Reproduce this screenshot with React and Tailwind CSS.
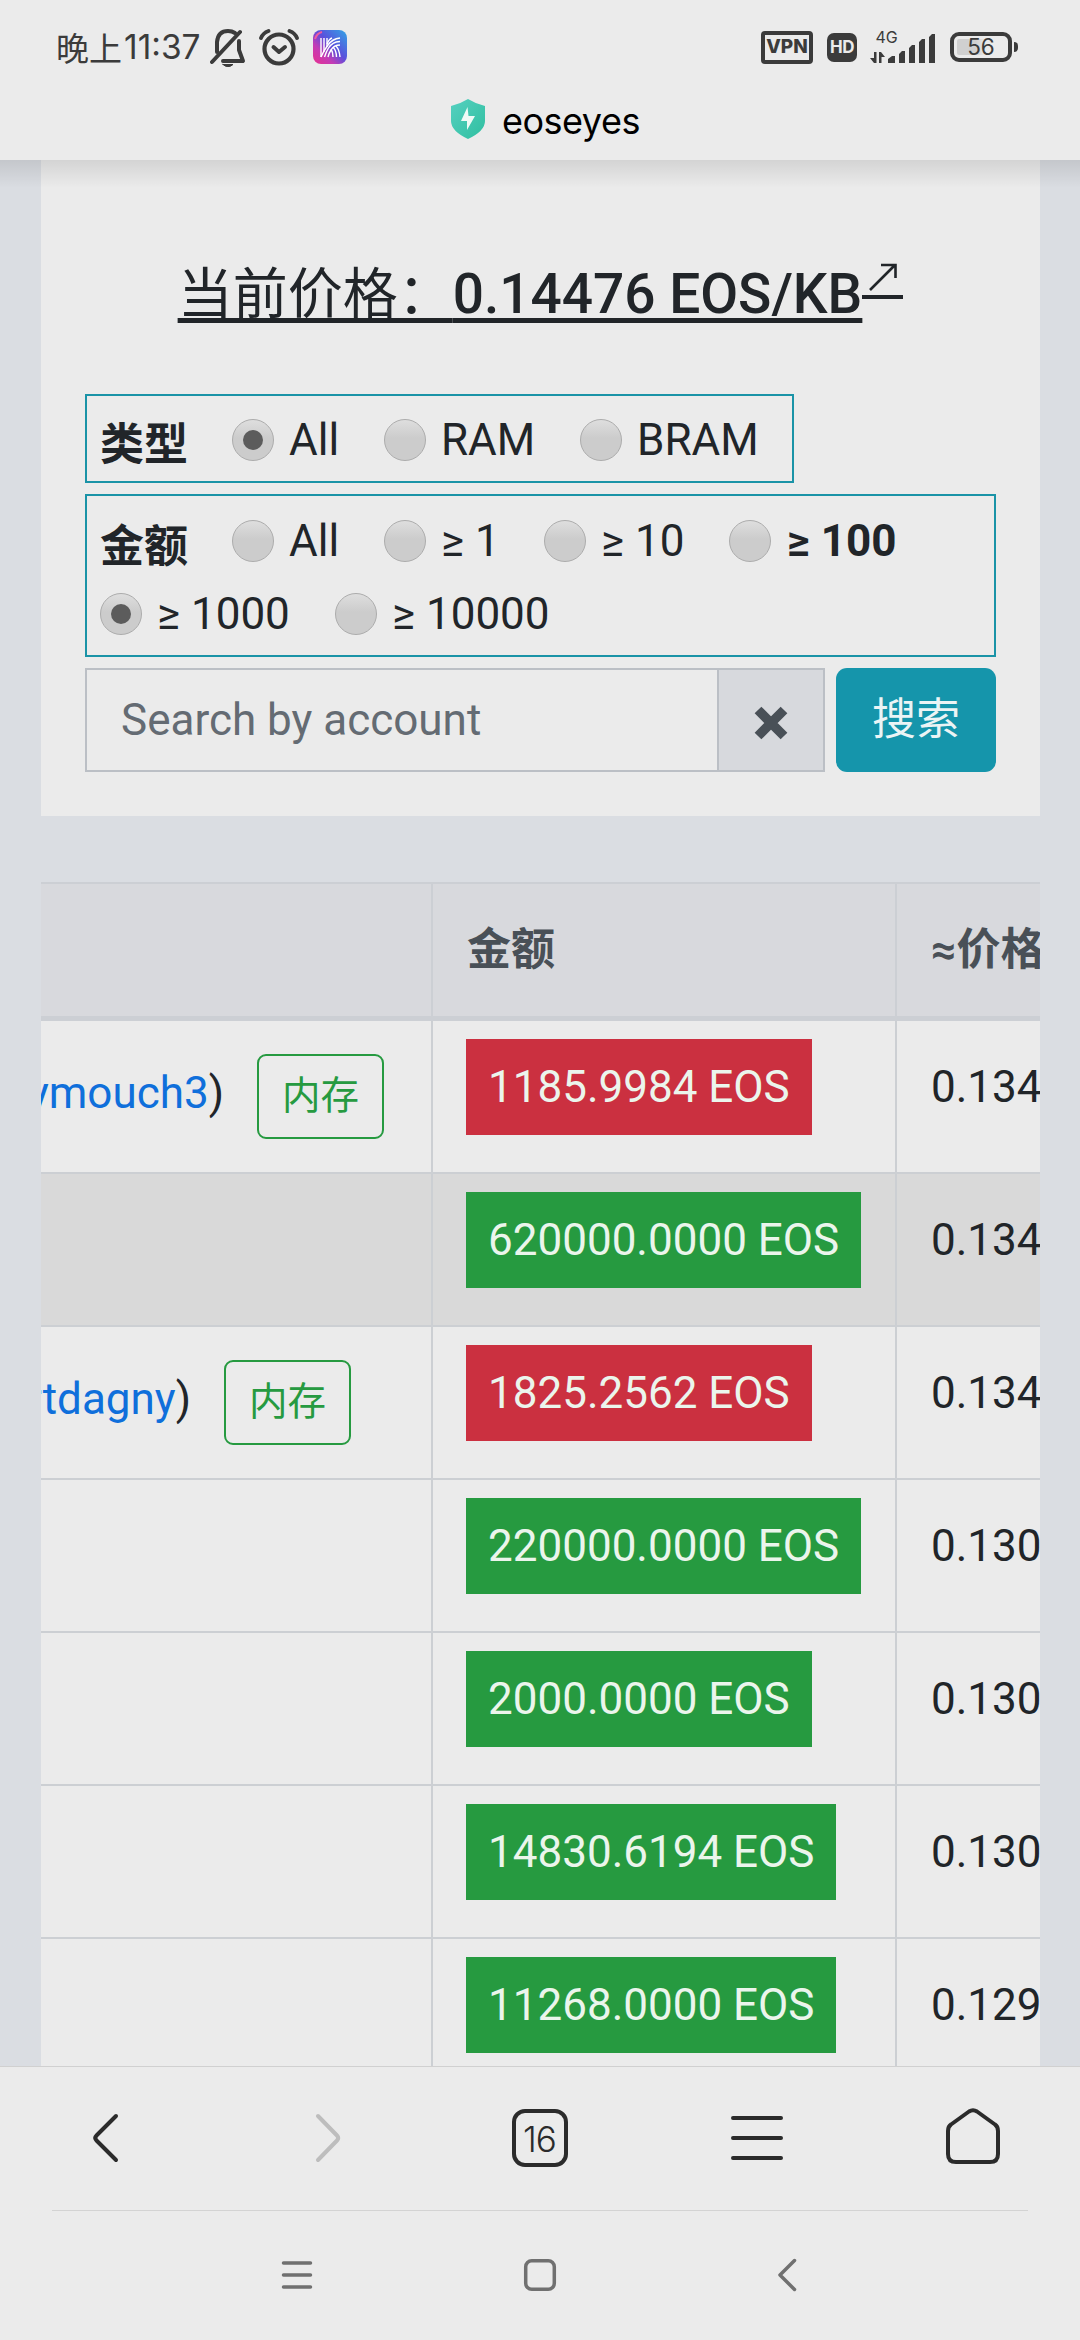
// filters
const TYPES = [
    {label: 'All', checked: true, width: 'w-[152px]'},
    {label: 'RAM', width: 'w-[196px]'},
    {label: 'BRAM', width: 'w-[180px]'}
];

const AMOUNTS = [
    {label: 'All', width: 'w-[152px]'},
    {label: '≥ 1', width: 'w-[160px]'},
    {label: '≥ 10', width: 'w-[185px]'},
    {label: '≥ 100', bold: true, width: 'w-[180px]'}
];

const LARGE_AMOUNTS = [
    {label: '≥ 1000', checked: true, width: 'w-[235px]'},
    {label: '≥ 10000', width: 'w-[220px]'}
];

// table rows
const ROWS = [
    {account: 'ymouch3', pad: 'pr-[47px]', amount: '1185.9984 EOS', sell: true, price: '0.134'},
    {amount: '620000.0000 EOS', price: '0.134', active: true},
    {account: 'rtdagny', pad: 'pr-[80px]', amount: '1825.2562 EOS', sell: true, price: '0.134'},
    {amount: '220000.0000 EOS', price: '0.130'},
    {amount: '2000.0000 EOS', price: '0.130'},
    {amount: '14830.6194 EOS', price: '0.130'},
    {amount: '11268.0000 EOS', price: '0.129'}
];

const StatusBar = () => (
    <div className="flex h-[94px] items-center pl-14 pr-[62px] text-[#3b3b3b]">
        <span className="flex w-[154px] shrink-0 items-center whitespace-nowrap text-[#3b3b3b]">
            <span className="font-['Noto_Sans_CJK_SC',sans-serif] text-[33px]">晚上</span>
            <span className="ml-0.5 font-['Inter',sans-serif] text-[33.500px] font-normal">11:37</span>
        </span>
        <svg className="h-10 w-9 shrink-0" viewBox="0 0 36 40" fill="none" stroke="currentColor" strokeWidth="4" strokeLinecap="round" strokeLinejoin="round">
            <path d="M7 25V15Q8 4 18 4Q22 4 25 6"/>
            <path d="M29 14V23L33 34H13"/>
            <path d="M2 35L30 5"/>
            <path d="M13 37.500H23Q18 42 13 37.500Z" fill="currentColor" strokeWidth="1"/>
        </svg>
        <svg className="ml-[13px] h-10 w-10 shrink-0" viewBox="0 0 40 40" fill="none" stroke="currentColor" strokeWidth="4.200" strokeLinecap="round" strokeLinejoin="round">
            <circle cx="20" cy="22" r="14.500"/>
            <path d="M14.500 20L20 25L26 20" strokeWidth="4"/>
            <path d="M2 11Q4 6 9.500 4M38 11Q36 6 30.500 4" strokeWidth="3.800"/>
        </svg>
        <svg className="ml-3.5 h-[34px] w-[34px] shrink-0" viewBox="0 0 34 34">
            <defs>
                <linearGradient id="app" x1="0" y1="1" x2="1" y2="0">
                    <stop offset="0" stopColor="#e8318f"/>
                    <stop offset="0.300" stopColor="#c43bb5"/>
                    <stop offset="0.550" stopColor="#5a50dc"/>
                    <stop offset="1" stopColor="#31a5e6"/>
                </linearGradient>
            </defs>
            <rect width="34" height="34" rx="8" fill="url(#app)"/>
            <path d="M2 9Q4 3 9 2" stroke="#ef5ba0" strokeWidth="2" fill="none"/>
            <g fill="none" stroke="#fff" strokeWidth="1.400">
                <path d="M8 8V27M11 8V22M14 8V17"/>
                <path d="M27 8Q19 9 15 15Q11 20 8 27"/>
                <path d="M27 11.500Q19 12 15.500 18Q13 22 11.500 27"/>
                <path d="M27 15Q21 15 18 20Q16 23 15 27"/>
                <path d="M19 8Q16 9 14 14M18 19Q20 22 20 27M20 17Q23.500 21 23.500 27M23 16Q26.500 20 27 27"/>
            </g>
        </svg>
        <div className="ml-auto flex h-[33px] w-[52px] items-center justify-center rounded-[4px] border-4 border-[#3b3b3b] font-['Inter',sans-serif] text-[19px] font-extrabold">
            VPN
        </div>
        <div className="ml-3.5 flex h-[29px] w-[30px] items-center justify-center rounded-[7px] bg-[#3b3b3b] font-['Inter',sans-serif] text-[17px] font-bold tracking-[-0.5px] text-[#ebebeb]">
            HD
        </div>
        <svg className="ml-[13px] h-9 w-[66px]" viewBox="0 0 66 36" fill="currentColor">
            <text x="5.500" y="13.500" fontSize="16" fontFamily="Inter, sans-serif">4G</text>
            <path d="M4 23H6.500V34H4L0 29H4ZM9 23H11L15 28H11.500V34H9Z"/>
            <path d="M18 34V30L22 27H25V34ZM29 34V25L32 22H35V34ZM39 34V19L42 16H45V34ZM49 34V13L52 10H55V34ZM59 34V8L62 5H65V34Z"/>
        </svg>
        <div className="ml-3.5 flex h-[30px] w-[62px] items-center justify-center rounded-[9px] border-4 border-[#3b3b3b] bg-linear-to-r from-[#d0d0d0] from-40% to-[#ebebeb] to-60% bg-clip-content p-[3px] font-['Inter',sans-serif] text-[22.500px] leading-none">
            56
        </div>
        <div className="ml-0.5 h-2.5 w-1 rounded-r-full bg-[#3b3b3b]"/>
    </div>
);

const Header = () => (
    <header className="relative z-10 h-40 shrink-0 bg-[#ebebeb]">
        <StatusBar/>
        <div className="flex h-[50px] items-center pl-[451px]">
            <svg className="h-10 w-[34px]" viewBox="0 0 34 40">
                <defs>
                    <linearGradient id="shield" x1="0" y1="0" x2="1" y2="1">
                        <stop offset="0" stopColor="#55d0c0"/>
                        <stop offset="1" stopColor="#30bfa0"/>
                    </linearGradient>
                </defs>
                <path d="M17 0Q25 5 34 7V22Q34 32 17 40Q0 32 0 22V7Q9 5 17 0Z" fill="url(#shield)"/>
                <path d="M16.500 8L10 22H16V31L24 17H17.500Z" fill="#effaf6"/>
            </svg>
            <span className="ml-[17px] pt-1 font-['Inter',sans-serif] text-[36px] leading-[50px] tracking-[-0.5px] text-black">eoseyes</span>
        </div>
        <div className="absolute inset-x-0 top-full h-7 bg-linear-to-b from-black/10 to-transparent"/>
    </header>
);

const Radio = ({label, checked, bold, width}) => (
    <label className={`flex shrink-0 items-center ${width}`}>
        <span className="flex size-[42px] shrink-0 items-center justify-center rounded-full border border-[#acacac] bg-linear-to-b from-[#dedede] to-[#cccccc] to-45%">
            {checked && <span className="size-5 rounded-full bg-[#5c5c5c]"/>}
        </span>
        <span className={`whitespace-nowrap ${bold ? 'ml-4 font-bold' : 'ml-[15px]'}`}>{label}</span>
    </label>
);

const Filters = () => (
    <section className="mx-[41px] flex h-[656px] w-[999px] shrink-0 flex-col bg-[#ebebeb] px-11 pt-[94px]">
        <h5 className="flex h-[80px] justify-center whitespace-nowrap text-[55px] leading-[80px]">
            <span className="underline decoration-[5px] underline-offset-[5px] [text-decoration-skip-ink:none]">
                当前价格：<b className="font-medium">0.14476 EOS/KB</b>
            </span>
            <span className="mt-[9px] flex h-[36px] w-[41px] justify-center border-b-4 border-[#212529]">
                <svg className="h-[28px] w-[30px]" viewBox="0 0 30 28" fill="none" stroke="currentColor" strokeWidth="2.600">
                    <path d="M2 27L27 2M13 2H27.500V15"/>
                </svg>
            </span>
        </h5>
        <div className="mt-[60px] flex h-[89px] w-[709px] items-center border-2 border-[#1a93a7] px-[13px] pt-0.5">
            <b className="mt-2.5 w-[132px]">类型</b>
            {TYPES.map(item => <Radio key={item.label} {...item}/>)}
        </div>
        <div className="mt-[11px] flex h-[163px] w-[911px] flex-col border-2 border-[#1a93a7] px-[13px] pt-[10px]">
            <div className="flex h-[70px] items-center">
                <b className="mt-3 w-[132px] shrink-0">金额</b>
                {AMOUNTS.map(item => <Radio key={item.label} {...item}/>)}
            </div>
            <div className="flex h-[76px] items-center">
                {LARGE_AMOUNTS.map(item => <Radio key={item.label} {...item}/>)}
            </div>
        </div>
        <div className="mt-[11px] flex h-[104px] w-[911px]">
            <div className="flex w-[634px] items-center border-2 border-[#bbbfc5] pl-[34px] text-[#646b73]">
                Search by account
            </div>
            <div className="flex w-[106px] items-center justify-center border-2 border-l-0 border-[#bbbfc5] bg-[#d7d9dd]">
                <svg className="mt-1.5 size-[34px] text-[#495057]" viewBox="0 0 34 34" stroke="currentColor" strokeWidth="9.500">
                    <path d="M4 4L30 30M30 4L4 30"/>
                </svg>
            </div>
            <button className="ml-[11px] w-40 rounded-[11px] bg-[#1595ab] text-[#ebf4f5]">搜索</button>
        </div>
    </section>
);

const Row = ({account, pad, amount, sell, price, active}) => (
    <div className={`flex h-[153px] shrink-0 border-b-2 border-[#cccfd3] ${active ? 'bg-[#d9d9d9]' : 'bg-[#ebebeb]'}`}>
        <div className={`flex w-[392px] shrink-0 justify-end overflow-hidden border-r-2 border-[#cccfd3] ${pad || ''}`}>
            {account && <>
                <span className="mt-[39px] h-[66px] whitespace-nowrap leading-[66px]">
                    <span className="text-[#0f6fdb]">{account}</span>)
                </span>
                <span className="ml-[33px] mt-[33px] flex h-[85px] w-[127px] shrink-0 items-center justify-center rounded-[9px] border-2 border-[#269a40] pb-0.5 text-[38.500px] text-[#269a40]">
                    内存
                </span>
            </>}
        </div>
        <div className="w-[464px] shrink-0 border-r-2 border-[#cccfd3] pl-[33px] pt-[18px]">
            <span className={`inline-block h-24 whitespace-nowrap px-[22px] leading-[96px] text-[#ebf5ec] ${sell ? 'bg-[#cb3040]' : 'bg-[#269a40]'}`}>
                {amount}
            </span>
        </div>
        <div className="w-[143px] shrink-0 overflow-hidden pl-[34px] pt-[18px] leading-[96px]">{price}</div>
    </div>
);

const Table = () => (
    <section className="mx-[41px] mt-[66px] flex min-h-0 w-[999px] flex-1 flex-col overflow-hidden">
        <div className="flex h-[139px] shrink-0 border-b-[5px] border-t-2 border-[#cccfd4] bg-[#d8d9dd] font-bold leading-[132px] text-[#495057]">
            <div className="w-[392px] shrink-0 border-r-2 border-[#cccfd4]"/>
            <div className="w-[464px] shrink-0 border-r-2 border-[#cccfd4] pl-[34px]">金额</div>
            <div className="w-[143px] shrink-0 overflow-hidden whitespace-nowrap pl-[34px]">≈价格</div>
        </div>
        {ROWS.map(row => <Row key={row.amount} {...row}/>)}
    </section>
);

const Toolbar = () => (
    <nav className="h-[144px] border-t border-[#d0d0d0] text-[#2b2b2b]">
        <div className="flex h-[143px] items-center justify-between pb-0.5 pl-[79px] pr-[80px]">
            <svg className="h-[60px] w-[54px]" viewBox="0 0 54 60" fill="none" stroke="currentColor" strokeWidth="4" strokeLinecap="round">
                <path d="M37 8L17.500 27.500Q15 30 17.500 32.500L37 52"/>
            </svg>
            <svg className="h-[60px] w-[54px] text-[#bdbdbd]" viewBox="0 0 54 60" fill="none" stroke="currentColor" strokeWidth="4" strokeLinecap="round">
                <path d="M23 8L42 27.500Q44.500 30 42 32.500L23 52"/>
            </svg>
            <div className="flex h-[58px] w-14 items-center justify-center rounded-[13px] border-4 border-[#2b2b2b] pt-1 font-['Inter',sans-serif] text-[35px] font-light leading-none tracking-[-1px]">
                16
            </div>
            <svg className="h-[60px] w-[54px]" viewBox="0 0 54 60" stroke="currentColor" strokeWidth="4" strokeLinecap="round">
                <path d="M3 10H51M3 30H51M3 50H51"/>
            </svg>
            <svg className="h-[60px] w-[54px]" viewBox="0 0 54 60" fill="none" stroke="currentColor" strokeWidth="4" strokeLinejoin="round">
                <path d="M23 3.500Q27 1 31 3.500L49 16.500Q52 18.500 52 23V46Q52 54 44 54H10Q2 54 2 46V23Q2 18.500 5 16.500Z"/>
            </svg>
        </div>
    </nav>
);

const SystemNav = () => (
    <div className="flex h-[130px] items-center justify-center gap-[210px] pb-0.5 text-[#707070]">
        <svg className="h-9 w-[34px]" viewBox="0 0 34 36" stroke="currentColor" strokeWidth="3.500" strokeLinecap="round">
            <path d="M4.500 6H31.500M4.500 18H31.500M4.500 30H31.500"/>
        </svg>
        <svg className="h-9 w-[34px]" viewBox="0 0 34 36" fill="none" stroke="currentColor" strokeWidth="3.500">
            <rect x="2.700" y="3.700" width="28.600" height="28.600" rx="6"/>
        </svg>
        <svg className="h-9 w-[34px]" viewBox="0 0 34 36" fill="none" stroke="currentColor" strokeWidth="3.500" strokeLinecap="round" strokeLinejoin="round">
            <path d="M27.500 3.500L13 18L27.500 32.500"/>
        </svg>
    </div>
);

const App = () => {
    return (
        <div lang="zh-CN" className="flex h-[2340px] w-[1080px] flex-col overflow-hidden bg-[#dadde2] font-['Roboto','Noto_Sans_CJK_SC',sans-serif] text-[44px] leading-[66px] text-[#212529]">
            <Header/>
            <Filters/>
            <Table/>
            <footer className="h-[274px] shrink-0 bg-[#ebebeb]">
                <Toolbar/>
                <div className="mx-[52px] h-px bg-[#d3d3d3]"/>
                <SystemNav/>
            </footer>
        </div>
    )
}

export default App
